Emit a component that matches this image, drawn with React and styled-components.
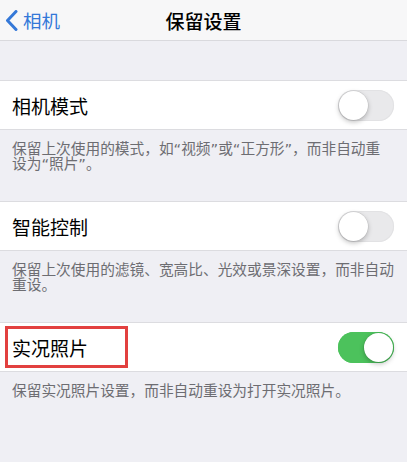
import React from "react";
import styled, { createGlobalStyle } from "styled-components";

const GlobalStyle = createGlobalStyle`
  html, body {
    margin: 0;
    padding: 0;
    background: #efeff4;
  }
  body {
    font-family: "Liberation Sans", "Noto Sans CJK SC", sans-serif;
    -webkit-font-smoothing: antialiased;
  }
`;

const Page = styled.div`
  width: 407px;
  min-height: 462px;
  background: #efeff4;
`;

const NavBar = styled.header`
  height: 40px;
  display: grid;
  grid-template-columns: 1fr auto 1fr;
  align-items: center;
  background: #f7f7f8;
  border-bottom: 1px solid #d9d9dd;
`;

const BackButton = styled.div`
  display: flex;
  align-items: center;
  gap: 5px;
  padding-left: 5px;
  color: #3478d8;
  font-size: 18.5px;
`;

const Title = styled.h1`
  margin: 0;
  font-size: 19px;
  font-weight: 500;
  color: #000;
`;

const Spacer = styled.div`
  height: 39px;
`;

const Row = styled.div`
  height: 48px;
  display: flex;
  align-items: center;
  justify-content: space-between;
  padding-left: ${(p) => (p.$marked ? "5px" : "12px")};
  padding-right: 13px;
  background: #fff;
  border-top: 1px solid #dcdce0;
  border-bottom: 1px solid #dcdce0;
`;

const Label = styled.span`
  font-size: 19px;
  color: #000;
`;

const Highlight = styled.div`
  box-sizing: border-box;
  width: 123px;
  height: 42px;
  display: flex;
  align-items: center;
  padding-left: 4px;
  border: 3px solid #e2403f;
`;

const Footer = styled.p`
  margin: 0;
  padding: 11px 8px 30px 12px;
  font-family: "DejaVu Sans", "Noto Sans CJK SC", sans-serif;
  font-size: 14.7px;
  line-height: 15px;
  color: #6d6d72;
  white-space: pre-line;
`;

const Track = styled.div`
  box-sizing: border-box;
  width: 56px;
  height: 31px;
  border-radius: 16px;
  padding: 1px;
  display: flex;
  justify-content: ${(p) => (p.$on ? "flex-end" : "flex-start")};
  align-items: center;
  background: ${(p) => (p.$on ? "#4cc25c" : "#e9e9eb")};
  box-shadow: inset 0 0 0 1px ${(p) => (p.$on ? "#4cc25c" : "#e2e2e4")};
`;

const Thumb = styled.div`
  width: 29px;
  height: 29px;
  border-radius: 50%;
  background: #fff;
  box-shadow: 0 2px 5px rgba(0, 0, 0, 0.25), 0 0 0 0.5px rgba(0, 0, 0, 0.1);
`;

function Toggle({ on }) {
  return (
    <Track $on={on}>
      <Thumb />
    </Track>
  );
}

const sections = [
  {
    label: "相机模式",
    on: false,
    note: "保留上次使用的模式，如“视频”或“正方形”，而非自动重\n设为“照片”。",
  },
  {
    label: "智能控制",
    on: false,
    note: "保留上次使用的滤镜、宽高比、光效或景深设置，而非自动重设。",
  },
  {
    label: "实况照片",
    on: true,
    marked: true,
    note: "保留实况照片设置，而非自动重设为打开实况照片。",
  },
];

export default function App() {
  return (
    <Page>
      <GlobalStyle />
      <NavBar>
        <BackButton>
          <svg width="13" height="21" viewBox="0 0 13 21">
            <path
              d="M11 1.5 L2.5 10.5 L11 19.5"
              fill="none"
              stroke="#3478d8"
              strokeWidth="3"
              strokeLinecap="round"
              strokeLinejoin="round"
            />
          </svg>
          <span>相机</span>
        </BackButton>
        <Title>保留设置</Title>
        <div />
      </NavBar>
      <Spacer />
      {sections.map((s) => (
        <React.Fragment key={s.label}>
          <Row $marked={s.marked}>
            {s.marked ? (
              <Highlight>
                <Label>{s.label}</Label>
              </Highlight>
            ) : (
              <Label>{s.label}</Label>
            )}
            <Toggle on={s.on} />
          </Row>
          <Footer>{s.note}</Footer>
        </React.Fragment>
      ))}
    </Page>
  );
}
